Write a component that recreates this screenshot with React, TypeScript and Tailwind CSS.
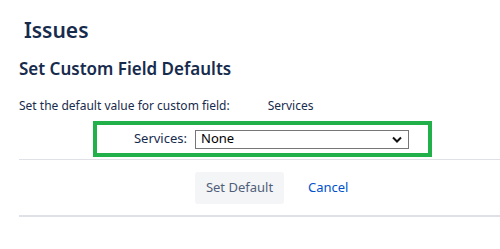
export default function App() {
  return (
    <div className="h-[249px] w-[500px] overflow-hidden bg-white font-['Segoe_UI','Noto_Sans',sans-serif] text-[#172b4d]">
      <div className="pl-[19px]">
        <h1 className="pl-[5px] pt-[17px] text-[21px] font-semibold leading-[27px] text-[#172b4d]">Issues</h1>
        <h2 className="mt-[14px] text-[17px] font-semibold leading-[22px] text-[#172b4d]">Set Custom Field Defaults</h2>
        <p className="mt-[18px] flex text-[12px] leading-[16px] text-[#172b4d]">
          <span>Set the default value for custom field:</span>
          <span className="ml-[38px]">Services</span>
        </p>
        <div className="mt-[7px] border-b border-[#dfe1e6]">
          <div className="mb-[2px] ml-[74px] flex h-[36px] w-[339px] items-center border-4 border-[#22b04b]">
            <label className="w-[98px] pr-[8px] text-right text-[13px] text-[#172b4d]">Services:</label>
            <div className="flex h-[19px] w-[214px] items-center justify-between border border-[#767676] bg-white pl-[5px] pr-[6px] text-[13px] text-black">
              <span>None</span>
              <svg width="10" height="7" viewBox="0 0 10 7" fill="none">
                <path d="M1 1.5 L5 5.5 L9 1.5" stroke="#111" strokeWidth="2" />
              </svg>
            </div>
          </div>
        </div>
        <div className="flex items-center border-b-[2px] border-[#dfe1e6] pb-[11px] pl-[176px] pt-[12px]">
          <button className="h-[32px] w-[89px] rounded-[3px] bg-[#f4f5f7] text-[13px] text-[#505f79]">Set Default</button>
          <a className="ml-[24px] text-[13px] text-[#0052cc]">Cancel</a>
        </div>
      </div>
    </div>
  );
}
